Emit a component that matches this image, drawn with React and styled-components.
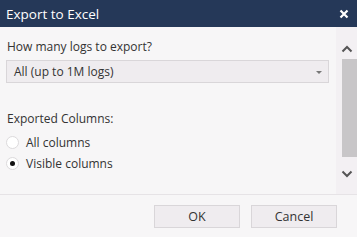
import styled, { createGlobalStyle } from 'styled-components';

const Global = createGlobalStyle`
  html, body {
    margin: 0;
    padding: 0;
    background: #f7f6f7;
    font-family: "Open Sans", "Liberation Sans", sans-serif;
  }
`;

const Dialog = styled.div`
  width: 357px;
  height: 237px;
  display: flex;
  flex-direction: column;
  background: #f7f6f7;
  overflow: hidden;
`;

const Header = styled.div`
  height: 27px;
  flex: none;
  display: flex;
  align-items: center;
  justify-content: space-between;
  padding: 0 8px 0 6px;
  background: #253858;
  color: #fff;
  font-size: 13.5px;
`;

const Close = styled.svg`
  width: 10px;
  height: 10px;
`;

const Body = styled.div`
  height: 167px;
  flex: none;
  display: flex;
  border-bottom: 1px solid #e6e3e6;
`;

const Content = styled.div`
  flex: 1;
  padding: 11px 7px 0 6px;
  color: #333;
  font-size: 12px;
`;

const Label = styled.div`
  margin: ${(p) => p.$top || 0}px 0 5px 1px;
  line-height: 17px;
`;

const Select = styled.div`
  height: 21px;
  display: flex;
  align-items: center;
  justify-content: space-between;
  padding: 0 6px 0 7px;
  background: #efecef;
  border: 1px solid #d9d6d9;
`;

const Caret = styled.span`
  width: 0;
  height: 0;
  border-left: 3px solid transparent;
  border-right: 3px solid transparent;
  border-top: 3px solid #777;
  margin-top: 2px;
`;

const RadioRow = styled.label`
  display: flex;
  align-items: center;
  gap: 7px;
  height: 21px;
`;

const Radio = styled.span`
  width: 11px;
  height: 11px;
  border-radius: 50%;
  background: #fff;
  border: 1px solid #dcdadc;
  display: flex;
  align-items: center;
  justify-content: center;
  &::after {
    content: '';
    width: 5px;
    height: 5px;
    border-radius: 50%;
    background: ${(p) => (p.$checked ? '#111' : 'transparent')};
  }
`;

const Scrollbar = styled.div`
  width: 21px;
  flex: none;
  display: flex;
  flex-direction: column;
  align-items: center;
  background: #f3f0f3;
`;

const Arrow = styled.svg`
  width: 12px;
  height: 8px;
  margin: ${(p) => p.$m};
`;

const Track = styled.div`
  flex: 1;
  align-self: flex-end;
  width: 15px;
`;

const Thumb = styled.div`
  height: 98px;
  background: #c8c6c8;
`;

const Footer = styled.div`
  flex: 1;
  display: flex;
  justify-content: flex-end;
  align-items: flex-start;
  gap: 11px;
  padding: 10px 20px 0 0;
`;

const Button = styled.button`
  width: 86px;
  height: 23px;
  background: #efecef;
  border: 1px solid #d9d6d9;
  color: #333;
  font-family: "Open Sans", "Liberation Sans", sans-serif;
  font-size: 12.5px;
  padding: 0;
`;

export default function App() {
  return (
    <Dialog>
      <Global />
      <Header>
        <span>Export to Excel</span>
        <Close viewBox="0 0 10 10">
          <path d="M1.5 1.5 L8.5 8.5 M8.5 1.5 L1.5 8.5" stroke="#fff" strokeWidth="2.2" />
        </Close>
      </Header>
      <Body>
        <Content>
          <Label>How many logs to export?</Label>
          <Select>
            <span>All (up to 1M logs)</span>
            <Caret />
          </Select>
          <Label $top={27}>Exported Columns:</Label>
          <RadioRow>
            <Radio />
            All columns
          </RadioRow>
          <RadioRow>
            <Radio $checked />
            Visible columns
          </RadioRow>
        </Content>
        <Scrollbar>
          <Arrow viewBox="0 0 12 8" $m="18px 0 6px">
            <path d="M1.5 6.5 L6 2 L10.5 6.5" fill="none" stroke="#555" strokeWidth="2" />
          </Arrow>
          <Track>
            <Thumb />
          </Track>
          <Arrow viewBox="0 0 12 8" $m="6px 0 16px">
            <path d="M1.5 1.5 L6 6 L10.5 1.5" fill="none" stroke="#555" strokeWidth="2" />
          </Arrow>
        </Scrollbar>
      </Body>
      <Footer>
        <Button>OK</Button>
        <Button>Cancel</Button>
      </Footer>
    </Dialog>
  );
}
